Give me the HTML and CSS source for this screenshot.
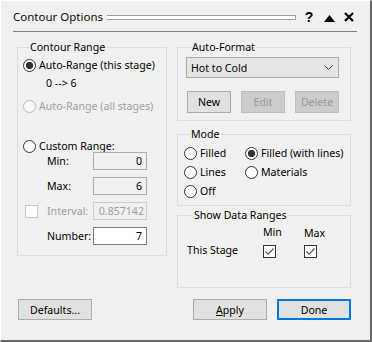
FILE: index.html
```html
<!DOCTYPE html>
<html>
<head>
<meta charset="utf-8">
<link rel="stylesheet" href="styles.css">
</head>
<body>
<div class="window">
  <div class="titlebar">
    <span class="title">Contour Options</span>
    <span class="grip"></span>
    <span class="tb-icons">
      <span class="help">?</span>
      <svg class="tri" width="11" height="7" viewBox="0 0 11 7"><polygon points="0,7 11,7 5.5,0" fill="#000"/></svg>
      <svg class="close" width="10" height="10" viewBox="0 0 10 10"><path d="M1 1 L9 9 M9 1 L1 9" stroke="#000" stroke-width="2.2"/></svg>
    </span>
  </div>
  <div class="title-sep"></div>

  <div class="main">
    <fieldset class="group range">
      <legend>Contour Range</legend>
      <div class="opt r1"><span class="radio checked"></span><span>Auto-Range (this stage)</span></div>
      <div class="rangeval">0 --&gt; 6</div>
      <div class="opt r2 disabled"><span class="radio"></span><span>Auto-Range (all stages)</span></div>
      <div class="opt r3"><span class="radio"></span><span>Custom Range:</span></div>
      <div class="fields">
        <div class="field"><span class="chk-slot"></span><span class="flabel">Min:</span><span class="edit ro">0</span></div>
        <div class="field"><span class="chk-slot"></span><span class="flabel">Max:</span><span class="edit ro">6</span></div>
        <div class="field disabled"><span class="chk-slot"><span class="check"></span></span><span class="flabel">Interval:</span><span class="edit dis">0.857142</span></div>
        <div class="field"><span class="chk-slot"></span><span class="flabel">Number:</span><span class="edit">7</span></div>
      </div>
    </fieldset>

    <div class="right-col">
      <fieldset class="group autoformat">
        <legend>Auto-Format</legend>
        <div class="select"><span>Hot to Cold</span>
          <svg width="9" height="5" viewBox="0 0 9 5"><path d="M0.5 0.5 L4.5 4.5 L8.5 0.5" fill="none" stroke="#404040" stroke-width="1"/></svg>
        </div>
        <div class="af-buttons">
          <span class="btn small">New</span>
          <span class="btn small off">Edit</span>
          <span class="btn small off">Delete</span>
        </div>
      </fieldset>

      <fieldset class="group mode">
        <legend>Mode</legend>
        <div class="mode-grid">
          <div class="opt"><span class="radio"></span><span>Filled</span></div>
          <div class="opt"><span class="radio checked"></span><span>Filled (with lines)</span></div>
          <div class="opt"><span class="radio"></span><span>Lines</span></div>
          <div class="opt"><span class="radio"></span><span>Materials</span></div>
          <div class="opt"><span class="radio"></span><span>Off</span></div>
        </div>
      </fieldset>

      <fieldset class="group ranges">
        <legend>Show Data Ranges</legend>
        <div class="ranges-grid">
          <span></span><span class="hdr">Min</span><span class="hdr max">Max</span>
          <span class="stage">This Stage</span>
          <span class="check on"><svg width="11" height="11" viewBox="0 0 11 11"><path d="M1.5 5.5 L4.2 8.2 L9.5 2.5" fill="none" stroke="#555" stroke-width="1.2"/></svg></span>
          <span class="check on"><svg width="11" height="11" viewBox="0 0 11 11"><path d="M1.5 5.5 L4.2 8.2 L9.5 2.5" fill="none" stroke="#555" stroke-width="1.2"/></svg></span>
        </div>
      </fieldset>
    </div>
  </div>

  <div class="footer">
    <span class="btn wide">Defaults...</span>
    <span class="spacer"></span>
    <span class="btn wide"><u>A</u>pply</span>
    <span class="btn wide default">Done</span>
  </div>
</div>
</body>
</html>
```

FILE: styles.css
```css
* { box-sizing: border-box; }
html, body { margin: 0; padding: 0; }
body {
  font-family: "Noto Sans", sans-serif;
  font-size: 10.6px;
  color: #000;
  background: #f0f0f0;
}
.window {
  width: 372px;
  height: 342px;
  background: #f0f0f0;
  border-top: 1px solid #ffffff;
  border-left: 1px solid #ffffff;
  border-right: 2px solid #696969;
  border-bottom: 2px solid #696969;
  overflow: hidden;
}
.titlebar {
  display: flex;
  align-items: center;
  height: 16px;
  margin-top: 8px;
  padding: 0 16px 0 12px;
  line-height: 16px;
}
.title { color: #0a0a14; font-size: 11.5px; }
.grip {
  flex: 1;
  height: 5px;
  margin: 0 8px 0 4px;
  border-top: 1px solid #a0a0a0;
  border-bottom: 1px solid #a0a0a0;
  border-right: 1px solid #a0a0a0;
  background: #ffffff;
}
.tb-icons { display: flex; align-items: center; }
.help { font-weight: bold; font-size: 14px; width: 10px; margin-right: 10px; text-align: center; font-family: "Liberation Sans", sans-serif; }
.tri { margin-right: 9px; margin-top: 2px; }
.close { margin-top: 0; }
.title-sep {
  height: 1px;
  margin: 6px 13px 0 12px;
  background: #808080;
}

.main {
  display: flex;
  align-items: flex-start;
  margin: 8px 0 0 16px;
  gap: 10px;
}
fieldset.group {
  margin: 0;
  padding: 0;
  min-width: 0;
  border: 1px solid #dcdcdc;
}
fieldset.group legend {
  padding: 0 1px;
  margin-left: 6px;
  line-height: 14px;
}
.range { width: 150px; height: 216px; padding-left: 5px !important; }
.right-col { display: flex; flex-direction: column; width: 174px; }
.autoformat { height: 81px; padding-left: 7px !important; }
.mode { height: 79px; margin-top: 6px !important; padding-left: 6px !important; }
.ranges { height: 80px; margin-top: 2px !important; padding-left: 9px !important; }

.opt { display: flex; align-items: center; height: 16px; white-space: nowrap; }
.opt .radio { margin-right: 3px; }
.radio {
  display: inline-block;
  width: 13px; height: 13px;
  border: 1px solid #333;
  border-radius: 50%;
  background: #fff;
  flex: none;
}
.radio.checked { background: radial-gradient(circle, #333 0 3.4px, #fff 3.9px); }
.disabled { color: #a0a0a0; }
.disabled .radio { border-color: #bcbcbc; background: #f7f7f7; }

.r1 { margin-top: 3px; }
.rangeval { height: 16px; line-height: 16px; margin-top: 2px; padding-left: 23px; }
.r2 { margin-top: 7px; }
.r3 { margin-top: 26px; height: 12px; }

.fields { display: flex; flex-direction: column; gap: 7px; margin-top: 0; }
.field { display: flex; align-items: center; height: 18px; }
.chk-slot { width: 24px; flex: none; display: flex; align-items: center; padding-left: 2px; }
.flabel { width: 46px; flex: none; white-space: nowrap; }
.edit {
  width: 54px; height: 18px;
  border: 1px solid #7a7a7a;
  background: #fff;
  text-align: right;
  padding-right: 4px;
  line-height: 16px;
}
.edit.ro { background: #f0f0f0; border-color: #adadad; }
.edit.dis { background: #f0f0f0; border-color: #cccccc; color: #a0a0a0; padding-right: 2px; }
.check {
  display: inline-flex; align-items: center; justify-content: center;
  width: 13px; height: 13px;
  border: 1px solid #333;
  background: #fff;
}
.field.disabled .check { border-color: #c8c8c8; background: #fdfdfd; }

.select {
  display: flex; align-items: center; justify-content: space-between;
  width: 153px; height: 21px;
  margin-top: 3px; margin-left: 1px;
  padding: 0 5px 0 4px;
  background: #e5e5e5;
  border: 1px solid #acacac;
}
.af-buttons { display: flex; gap: 10px; margin-top: 13px; margin-left: 2px; }
.btn {
  display: inline-flex; align-items: center; justify-content: center;
  background: #e1e1e1;
  border: 1px solid #adadad;
  color: #000;
}
.btn.small { width: 44px; height: 22px; }
.btn.off { background: #cccccc; border-color: #bfbfbf; color: #9a9a9a; }

.mode-grid {
  display: grid;
  grid-template-columns: 61px auto;
  row-gap: 3px;
  margin-top: 4px;
}

.ranges-grid {
  display: grid;
  grid-template-columns: 76px 41px auto;
  grid-template-rows: 16px 16px;
  row-gap: 2px;
  margin-top: 2px;
  align-items: center;
}
.hdr { line-height: 16px; }
.hdr.max { position: relative; top: 1px; }
.stage { line-height: 16px; }
.ranges-grid .check { margin-top: 2px; }

.footer {
  display: flex;
  align-items: center;
  margin: 11px 19px 0 17px;
}
.spacer { flex: 1; }
.btn.wide { width: 74px; height: 21px; }
.btn.wide + .btn.wide { margin-left: 10px; }
.btn.default { border: 2px solid #0078d7; }
```
